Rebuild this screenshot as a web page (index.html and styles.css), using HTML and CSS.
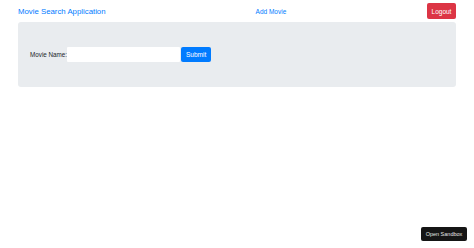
FILE: index.html
```html
<!DOCTYPE html>
<html lang="en">

<head>
    <meta charset="UTF-8">
    <meta name="viewport" content="width=device-width, initial-scale=1.0">
    <title>Movie Search Application</title>
    <link rel="stylesheet" href="styles.css">
</head>

<body>

    <!-- Navbar -->
    <nav class="navbar">
        <a href="#" class="brand">Movie Search Application</a>
        <a href="#" class="nav-link">Add Movie</a>
        <button class="btn btn-danger">Logout</button>
    </nav>

    <!-- Search Box -->
    <div class="jumbotron">
        <form class="search-form">
            <label for="movie">Movie Name:</label>
            <input type="text" id="movie" class="search-input">
            <button type="submit" class="btn btn-primary">Submit</button>
        </form>
    </div>

    <a href="#" class="sandbox-btn">Open Sandbox</a>

</body>

</html>
```

FILE: styles.css
```css
/* General Reset */
* {
    margin: 0;
    padding: 0;
    box-sizing: border-box;
    font-family: "Liberation Sans", Arial, sans-serif;
}

body {
    background-color: #fff;
    color: #212529;
}

/* Navbar */
.navbar {
    display: flex;
    align-items: center;
    height: 22px;
    padding: 0 18px;
}

.brand {
    color: #007bff;
    text-decoration: none;
    font-size: 7.8px;
}

.nav-link {
    color: #007bff;
    text-decoration: none;
    font-size: 6.5px;
    margin-left: 150px;
}

.btn {
    border: none;
    border-radius: 2px;
    color: #fff;
    font-size: 6.5px;
    cursor: pointer;
}

.btn-danger {
    background-color: #dc3545;
    margin-left: auto;
    width: 29px;
    height: 16px;
}

.btn-primary {
    background-color: #007bff;
    width: 30px;
    height: 15px;
    margin-left: 1px;
}

/* Jumbotron */
.jumbotron {
    background-color: #e9ecef;
    border-radius: 3px;
    margin: 0 18px;
    height: 65px;
    padding-left: 12px;
    display: flex;
    align-items: center;
}

.search-form {
    display: flex;
    align-items: center;
}

.search-form label {
    font-size: 6.3px;
    color: #212529;
}

.search-input {
    width: 113px;
    height: 15px;
    border: none;
    background-color: #fff;
    border-radius: 1px;
}

/* Sandbox button */
.sandbox-btn {
    position: fixed;
    right: 7px;
    bottom: 7px;
    width: 46px;
    height: 14px;
    background-color: #151515;
    color: #e6e6e6;
    font-size: 5.5px;
    text-decoration: none;
    border-radius: 2px;
    display: flex;
    align-items: center;
    justify-content: center;
}
```
